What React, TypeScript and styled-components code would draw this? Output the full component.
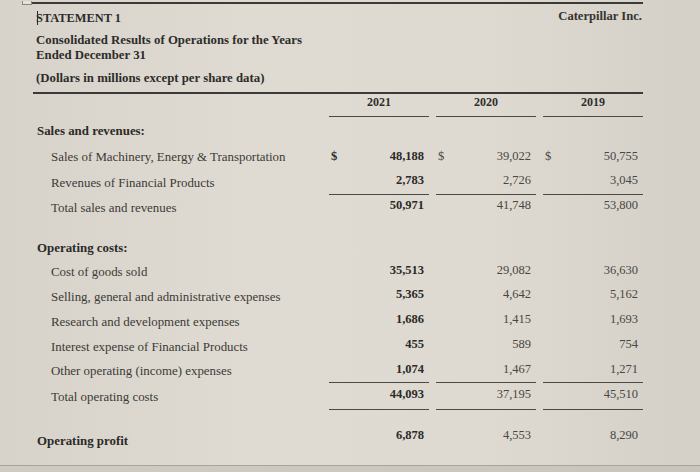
import React from "react";
import styled, { createGlobalStyle } from "styled-components";

const GlobalStyle = createGlobalStyle`
  html, body { margin: 0; padding: 0; }
  body {
    background: #dcd8cf;
    font-family: "Liberation Serif", "Times New Roman", serif;
  }
`;

const Page = styled.div`
  width: 700px;
  height: 472px;
  box-sizing: border-box;
  display: flex;
  flex-direction: column;
  background: linear-gradient(90deg, #d7d3ca 0%, #dfdbd2 35%, #dedad1 70%, #d4d0c7 100%);
  overflow: hidden;
`;

const Sheet = styled.div`
  width: 610px;
  margin-left: 33px;
  display: flex;
  flex-direction: column;
`;

const TopBar = styled.div`
  display: flex;
  align-items: flex-end;
  height: 5px;
  margin-left: -11px;
`;

const Handle = styled.div`
  width: 10px;
  height: 4px;
  border: 1px solid #8c8a85;
  border-top: none;
  box-sizing: border-box;
  background: #e4e1da;
`;

const TopRule = styled.div`
  flex: 1;
  height: 2px;
  margin-bottom: 1px;
  background: #3b3a38;
`;

const Header = styled.div`
  display: flex;
  justify-content: space-between;
  align-items: flex-start;
`;

const TitleBlock = styled.div`
  display: flex;
  flex-direction: column;
  padding-left: 3px;
  padding-top: 6px;
`;

const Statement = styled.div`
  position: relative;
  font-weight: bold;
  font-size: 12.4px;
  line-height: 14px;
  color: #2d2c2a;
  &::before {
    content: "";
    position: absolute;
    left: 1px;
    top: 0px;
    width: 1px;
    height: 14px;
    background: #2d2c2a;
  }
`;

const Title = styled.div`
  margin-top: 8px;
  font-weight: bold;
  font-size: 12.8px;
  line-height: 15px;
  color: #2d2c2a;
`;

const Subtitle = styled.div`
  margin-top: 8px;
  font-weight: bold;
  font-size: 12.8px;
  line-height: 14px;
  color: #2d2c2a;
`;

const Company = styled.div`
  padding-top: 4px;
  padding-right: 1px;
  font-weight: bold;
  font-size: 12.6px;
  line-height: 14px;
  color: #353431;
`;

const MainRule = styled.div`
  margin-top: 7px;
  height: 2px;
  background: #3b3a38;
`;

const Grid = styled.div<{ $h?: number }>`
  display: grid;
  grid-template-columns: 289px 100px 100px 100px;
  column-gap: 7px;
  height: ${(p) => p.$h ?? 25}px;
`;

const YearCell = styled.div`
  border-bottom: 1.5px solid #4a4946;
  text-align: center;
  font-weight: bold;
  font-size: 12px;
  line-height: 14px;
  padding-top: 1px;
  color: #2f2e2c;
`;

const Label = styled.div<{ $indent?: boolean; $bold?: boolean }>`
  display: flex;
  align-items: center;
  padding-left: ${(p) => (p.$indent ? 18 : 4)}px;
  padding-top: 2px;
  font-size: 12.9px;
  font-weight: ${(p) => (p.$bold ? "bold" : "normal")};
  color: ${(p) => (p.$bold ? "#2b2a28" : "#3b3a37")};
  white-space: nowrap;
`;

const Value = styled.div<{ $bold?: boolean; $rule?: boolean; $lift?: number }>`
  display: flex;
  align-items: center;
  justify-content: space-between;
  padding: 0 5px ${(p) => p.$lift ?? 2.5}px 2px;
  box-sizing: border-box;
  border-bottom: ${(p) => (p.$rule ? "1.5px solid #4a4946" : "1.5px solid transparent")};
  font-size: 12.5px;
  font-weight: ${(p) => (p.$bold ? "bold" : "normal")};
  color: ${(p) => (p.$bold ? "#2b2a28" : "#484744")};
`;

const Dollar = styled.span``;

const Spacer = styled.div<{ $h: number }>`
  height: ${(p) => p.$h}px;
`;

const BottomEdge = styled.div`
  margin-top: auto;
  height: 6px;
  border-top: 1px solid #a8a49d;
  background: linear-gradient(90deg, #cfcbc3, #c9c5bd);
`;

type RowData = {
  label: string;
  bold?: boolean;
  indent?: boolean;
  values?: [string, string, string];
  dollar?: boolean;
  rule?: boolean;
  h?: number;
  lift?: number;
};

const Row: React.FC<RowData> = ({ label, bold, indent, values, dollar, rule, h, lift }) => (
  <Grid $h={h}>
    <Label $indent={indent} $bold={bold}>{label}</Label>
    {[0, 1, 2].map((i) => (
      <Value key={i} $bold={i === 0} $rule={rule} $lift={lift}>
        <Dollar>{dollar ? "$" : ""}</Dollar>
        <span>{values ? values[i] : ""}</span>
      </Value>
    ))}
  </Grid>
);

export default function App() {
  return (
    <Page>
      <GlobalStyle />
      <Sheet>
        <TopBar>
          <Handle />
          <TopRule />
        </TopBar>
        <Header>
          <TitleBlock>
            <Statement>STATEMENT 1</Statement>
            <Title>
              Consolidated Results of Operations for the Years
              <br />
              Ended December 31
            </Title>
            <Subtitle>(Dollars in millions except per share data)</Subtitle>
          </TitleBlock>
          <Company>Caterpillar Inc.</Company>
        </Header>
        <MainRule />
        <Grid $h={23}>
          <div />
          <YearCell>2021</YearCell>
          <YearCell>2020</YearCell>
          <YearCell>2019</YearCell>
        </Grid>
        <Row label="Sales and revenues:" bold h={27} />
        <Row
          label="Sales of Machinery, Energy & Transportation"
          indent
          dollar
          lift={0}
          values={["48,188", "39,022", "50,755"]}
        />
        <Row label="Revenues of Financial Products" indent rule h={26} values={["2,783", "2,726", "3,045"]} />
        <Row label="Total sales and revenues" indent values={["50,971", "41,748", "53,800"]} />
        <Spacer $h={15} />
        <Row label="Operating costs:" bold h={24.5} />
        <Row label="Cost of goods sold" indent h={24.75} values={["35,513", "29,082", "36,630"]} />
        <Row
          label="Selling, general and administrative expenses"
          indent
          h={24.75}
          values={["5,365", "4,642", "5,162"]}
        />
        <Row label="Research and development expenses" indent h={24.75} lift={3.5} values={["1,686", "1,415", "1,693"]} />
        <Row label="Interest expense of Financial Products" indent h={24.75} values={["455", "589", "754"]} />
        <Row
          label="Other operating (income) expenses"
          indent
          rule
          h={24.75}
          values={["1,074", "1,467", "1,271"]}
        />
        <Row label="Total operating costs" indent rule h={26.75} lift={3.5} values={["44,093", "37,195", "45,510"]} />
        <Spacer $h={16} />
        <Row label="Operating profit" bold h={28} lift={8.5} values={["6,878", "4,553", "8,290"]} />
      </Sheet>
      <BottomEdge />
    </Page>
  );
}
